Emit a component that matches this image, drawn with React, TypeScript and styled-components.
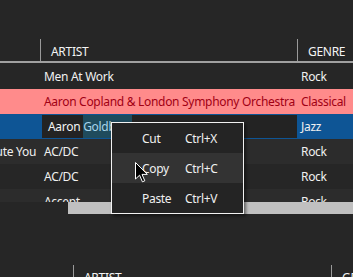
import React from "react";
import styled, { createGlobalStyle } from "styled-components";

const GlobalStyle = createGlobalStyle`
  html, body {
    margin: 0;
    padding: 0;
    background: #262626;
  }
  body {
    font-family: "Noto Sans", "Open Sans", sans-serif;
    font-size: 12px;
    letter-spacing: -0.3px;
    color: #f0f0f0;
  }
`;

type Row = { lead?: string; artist: string; genre: string; kind?: "normal" | "error" | "editing" };

const rows: Row[] = [
  { artist: "Men At Work", genre: "Rock" },
  { artist: "Aaron Copland & London Symphony Orchestra", genre: "Classical", kind: "error" },
  { artist: "Aaron ", genre: "Jazz", kind: "editing" },
  { lead: "ute You", artist: "AC/DC", genre: "Rock" },
  { artist: "AC/DC", genre: "Rock" },
  { artist: "Accept", genre: "Rock" },
];

const menuItems = [
  { label: "Cut", keys: "Ctrl+X" },
  { label: "Copy", keys: "Ctrl+C", hover: true },
  { label: "Paste", keys: "Ctrl+V" },
];

export default function App() {
  return (
    <S.Screen>
      <GlobalStyle />
      <S.Grid $top={39}>
        <S.Header>
          <S.HeadCell $w={40} />
          <S.HeadCell $w={257} $sep>ARTIST</S.HeadCell>
          <S.HeadCell $w={60} $sep>GENRE</S.HeadCell>
        </S.Header>
        <S.Body>
          {rows.map((r, i) => (
            <S.Row key={i} $kind={r.kind || "normal"} $odd={i % 2 === 1}>
              <S.LeadCell>{r.lead}</S.LeadCell>
              {r.kind === "editing" ? (
                <S.EditCell>
                  <S.Editor>
                    <S.EditText>{r.artist}</S.EditText>
                    <S.Selection>Goldb</S.Selection>
                  </S.Editor>
                </S.EditCell>
              ) : (
                <S.ArtistCell>{r.artist}</S.ArtistCell>
              )}
              <S.GenreCell>{r.genre}</S.GenreCell>
            </S.Row>
          ))}
        </S.Body>
        <S.ScrollTrack>
          <S.Thumb />
        </S.ScrollTrack>
      </S.Grid>

      <S.Grid $top={51}>
        <S.Header>
          <S.HeadCell $w={73} />
          <S.HeadCell $w={258} $sep>ARTIST</S.HeadCell>
          <S.HeadCell $w={60} $sep>GENRE</S.HeadCell>
        </S.Header>
      </S.Grid>

      <S.Menu>
        {menuItems.map((m) => (
          <S.MenuItem key={m.label} $hover={!!m.hover}>
            <S.MenuLabel>{m.label}</S.MenuLabel>
            <S.MenuKeys>{m.keys}</S.MenuKeys>
          </S.MenuItem>
        ))}
      </S.Menu>

      <S.Cursor width="13" height="21" viewBox="0 0 13 21">
        <path d="M0.5 0.5 L0.5 17 L4.6 13.2 L7.4 19.8 L9.8 18.8 L7 12.4 L12.3 12.4 Z" fill="#000" stroke="#fff" strokeWidth="1" />
      </S.Cursor>
    </S.Screen>
  );
}

const Screen = styled.div`
  position: relative;
  width: 353px;
  height: 277px;
  overflow: hidden;
  background: #262626;
`;

const Grid = styled.div<{ $top: number }>`
  padding-top: ${({ $top }) => $top}px;
  display: flex;
  flex-direction: column;
`;

const Header = styled.div`
  display: flex;
  height: 22px;
  border-bottom: 2px solid #a0a0a0;
  flex-shrink: 0;
`;

const HeadCell = styled.div<{ $w: number; $sep?: boolean }>`
  flex: 0 0 ${({ $w }) => $w}px;
  box-sizing: border-box;
  border-left: ${({ $sep }) => ($sep ? "1px solid #9a9a9a" : "none")};
  padding-left: 10px;
  display: flex;
  align-items: center;
  padding-top: 2px;
  white-space: nowrap;
  color: #f4f4f4;
`;

const Body = styled.div`
  height: 138px;
  padding-top: 1px;
  overflow: hidden;
`;

const rowBg = { normal: "", error: "#ff8b8b", editing: "#0e5595" };

const Row = styled.div<{ $kind: "normal" | "error" | "editing"; $odd: boolean }>`
  display: flex;
  height: 25px;
  align-items: stretch;
  white-space: nowrap;
  background: ${({ $kind, $odd }) => rowBg[$kind] || ($odd ? "#2c2c2c" : "#262626")};
  color: ${({ $kind }) => ($kind === "error" ? "#a10014" : "#f0f0f0")};
`;

const LeadCell = styled.div`
  flex: 0 0 40px;
  overflow: hidden;
  display: flex;
  align-items: center;
  justify-content: flex-end;
  padding-right: 4px;
  box-sizing: border-box;
`;

const ArtistCell = styled.div`
  flex: 0 0 257px;
  box-sizing: border-box;
  padding-left: 4px;
  display: flex;
  align-items: center;
  overflow: hidden;
`;

const EditCell = styled.div`
  flex: 0 0 257px;
  box-sizing: border-box;
  padding: 1px 0 1px 2px;
  display: flex;
`;

const Editor = styled.div`
  flex: 1;
  background: #232323;
  padding-left: 6px;
  display: flex;
  align-items: center;
  color: #f4f4f4;
`;

const EditText = styled.span`
  white-space: pre;
`;

const Selection = styled.span`
  background: #1f4b5d;
  color: #a9d4ea;
  padding: 3px 0;
  width: 49px;
`;

const GenreCell = styled.div`
  flex: 1;
  padding-left: 4px;
  display: flex;
  align-items: center;
`;

const ScrollTrack = styled.div`
  height: 12px;
  display: flex;
`;

const Thumb = styled.div`
  margin-left: 68px;
  flex: 1;
  background: #c0c0c0;
`;

const Menu = styled.div`
  position: absolute;
  left: 111px;
  top: 122px;
  width: 133px;
  box-sizing: border-box;
  border: 1px solid #f2f2f2;
  background: #242424;
  box-shadow: 2px 2px 3px rgba(0, 0, 0, 0.5);
  display: flex;
  flex-direction: column;
`;

const MenuItem = styled.div<{ $hover: boolean }>`
  display: flex;
  align-items: center;
  height: 30px;
  background: ${({ $hover }) => ($hover ? "#333333" : "transparent")};
  color: #f0f0f0;
`;

const MenuLabel = styled.span`
  width: 73px;
  padding-left: 30px;
  box-sizing: border-box;
`;

const MenuKeys = styled.span``;

const Cursor = styled.svg`
  position: absolute;
  left: 135px;
  top: 162px;
`;

const S = {
  Screen,
  Grid,
  Header,
  HeadCell,
  Body,
  Row,
  LeadCell,
  ArtistCell,
  EditCell,
  Editor,
  EditText,
  Selection,
  GenreCell,
  ScrollTrack,
  Thumb,
  Menu,
  MenuItem,
  MenuLabel,
  MenuKeys,
  Cursor,
};
